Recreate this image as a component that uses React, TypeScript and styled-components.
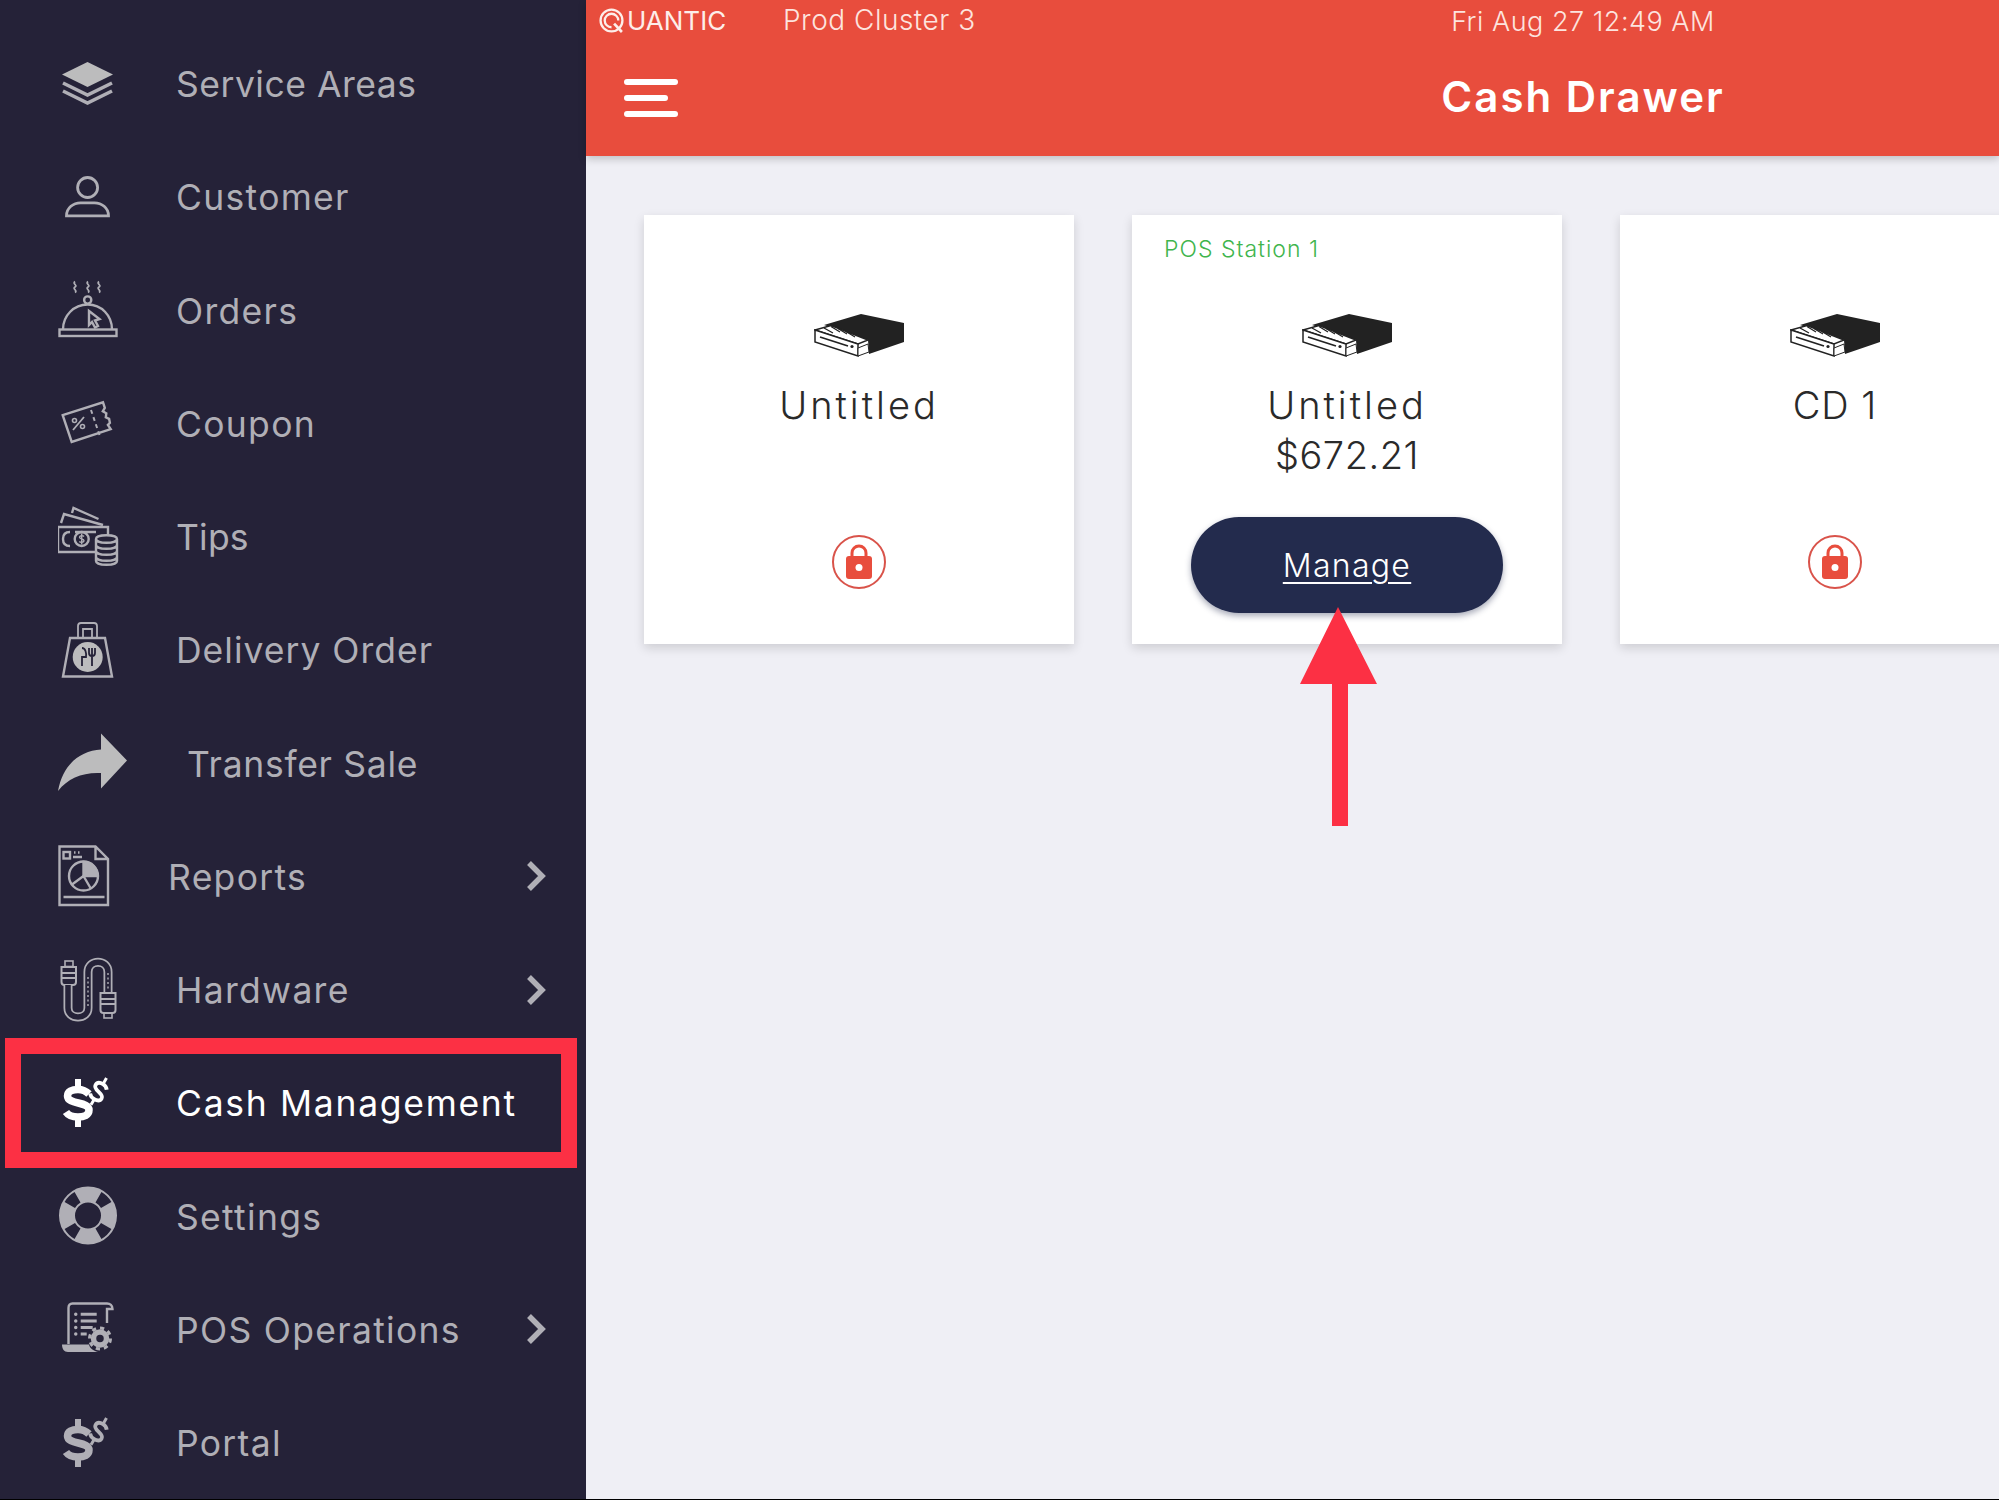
import React from "react";
import styled, { createGlobalStyle } from "styled-components";

const GlobalStyle = createGlobalStyle`
  html, body {
    margin: 0;
    padding: 0;
    height: 1500px;
    overflow: hidden;
    background: #000;
    font-family: Inter, "Liberation Sans", sans-serif;
  }
`;

const Page = styled.div`
  display: flex;
  width: 1999px;
  height: 1499px;
  overflow: hidden;
`;

const Sidebar = styled.nav`
  flex: 0 0 586px;
  display: flex;
  flex-direction: column;
  padding-top: 27px;
  box-sizing: border-box;
  background: #252238;
`;

const NavRow = styled.div<{ $active?: boolean }>`
  position: relative;
  flex: 0 0 113.25px;
  display: flex;
  align-items: center;
  padding: 0 40px 0 58px;
  box-sizing: border-box;
  color: ${(p) => (p.$active ? "#ffffff" : "#b0afb6")};
`;

const NavIcon = styled.svg`
  flex: 0 0 70px;
  width: 70px;
  height: 70px;
  fill: none;
  stroke: currentColor;
  stroke-width: 2.4;
  color: inherit;
`;

const NavLabel = styled.span<{ $indent?: number; $tracking?: number }>`
  margin-left: ${(p) => p.$indent ?? 48}px;
  padding-top: 2px;
  font-size: 35.5px;
  font-weight: 400;
  letter-spacing: ${(p) => p.$tracking ?? 1.3}px;
  white-space: nowrap;
`;

const Chevron = styled.svg`
  margin-left: auto;
  width: 20px;
  height: 30px;
  fill: none;
  stroke: #b0afb6;
  stroke-width: 5.5;
`;

const HighlightBox = styled.div`
  position: absolute;
  top: -8px;
  bottom: -8px;
  left: 5px;
  right: 9px;
  border: 16px solid #fc3044;
`;

const Content = styled.div`
  flex: 1;
  display: flex;
  flex-direction: column;
  min-width: 0;
  background: #efeff5;
`;

const Header = styled.header`
  position: relative;
  z-index: 1;
  flex: 0 0 156px;
  display: grid;
  grid-template-columns: 1fr 832px;
  grid-template-rows: 40px 1fr;
  background: #e84d3d;
  color: #ffffff;
  box-shadow: 0 3px 8px rgba(0, 0, 0, 0.2);
`;

const StatusLeft = styled.div`
  display: flex;
  align-items: center;
  padding-left: 13px;
`;

const Brand = styled.div`
  display: flex;
  align-items: center;
  gap: 3px;
  width: 184px;
  font-size: 26px;
  font-weight: 400;
  color: #fdeeea;
`;

const BrandMark = styled.svg`
  width: 25px;
  height: 25px;
  fill: none;
  stroke: #fdeeea;
  stroke-width: 2.2;
`;

const Cluster = styled.span`
  font-size: 28px;
  font-weight: 300;
  letter-spacing: 0.5px;
  color: #fde4df;
`;

const Clock = styled.div`
  display: flex;
  align-items: center;
  justify-content: center;
  padding-top: 2px;
  font-size: 27px;
  font-weight: 300;
  letter-spacing: 0.5px;
  color: #fde4df;
`;

const Hamburger = styled.div`
  display: flex;
  flex-direction: column;
  gap: 10px;
  padding: 39px 0 0 38px;
`;

const HamburgerBar = styled.span<{ $short?: boolean }>`
  display: block;
  width: ${(p) => (p.$short ? 44 : 54)}px;
  height: 6px;
  border-radius: 3px;
  background: #ffffff;
`;

const Title = styled.h1`
  margin: 0;
  padding-top: 10px;
  text-align: center;
  font-size: 42px;
  line-height: 94px;
  font-weight: 600;
  letter-spacing: 2px;
`;

const Main = styled.main`
  position: relative;
  flex: 1;
  display: flex;
  align-items: flex-start;
  gap: 58px;
  padding: 59px 0 0 58px;
  overflow: hidden;
`;

const Card = styled.section`
  flex: 0 0 430px;
  height: 429px;
  display: flex;
  flex-direction: column;
  align-items: center;
  box-sizing: border-box;
  padding: 20px 0 31px;
  background: #ffffff;
  box-shadow: 0 4px 10px rgba(0, 0, 0, 0.14);
`;

const StationLabel = styled.div`
  align-self: stretch;
  height: 28px;
  margin-bottom: 50px;
  padding-left: 32px;
  font-size: 23px;
  line-height: 28px;
  font-weight: 300;
  letter-spacing: 1px;
  color: #3fb54d;
`;

const DrawerIcon = styled.svg`
  width: 91px;
  height: 44px;
  flex: none;
`;

const CardName = styled.div`
  margin-top: 23px;
  font-size: 38px;
  line-height: 50px;
  font-weight: 300;
  text-align: center;
  color: #2a2a2a;
`;

const NameLine = styled.div<{ $tracking: number }>`
  letter-spacing: ${(p) => p.$tracking}px;
`;

const CardFooter = styled.div`
  margin-top: auto;
  height: 96px;
  display: flex;
  align-items: center;
  justify-content: center;
  align-self: stretch;
`;

const LockBadge = styled.div`
  width: 54px;
  height: 54px;
  margin-bottom: 6px;
  border: 2px solid #d9534a;
  border-radius: 50%;
  box-sizing: border-box;
  display: flex;
  align-items: center;
  justify-content: center;
`;

const ManageButton = styled.button`
  width: 312px;
  height: 96px;
  border: none;
  border-radius: 48px;
  background: #232b4d;
  color: #ffffff;
  font-family: inherit;
  font-size: 32px;
  font-weight: 300;
  letter-spacing: 1.3px;
  text-decoration: underline;
  text-underline-offset: 5px;
  text-decoration-thickness: 2px;
  box-shadow: 0 3px 6px rgba(35, 43, 77, 0.4);
`;

const PointerArrow = styled.svg`
  position: absolute;
  left: 714px;
  top: 451px;
  width: 78px;
  height: 220px;
  fill: #fc3044;
`;

const LayersIcon = () => (
  <NavIcon viewBox="0 0 70 70">
    <polygon points="4,25.5 29.5,13 55,25.5 29.5,38" fill="#bcbcbd" stroke="none" />
    <polyline points="5,34 29.5,46 54,34" strokeWidth="3.6" />
    <polyline points="5,42 29.5,54 54,42" strokeWidth="3.6" />
  </NavIcon>
);

const CustomerIcon = () => (
  <NavIcon viewBox="0 0 70 70">
    <circle cx="29.6" cy="25.5" r="10" strokeWidth="2.8" />
    <path d="M8.5 53.8h42c0-8-7-13-14-13h-14c-7 0-14 5-14 13z" strokeWidth="2.8" />
  </NavIcon>
);

const OrdersIcon = () => (
  <NavIcon viewBox="0 0 70 70">
    <path d="M17 6.500c-3 2.500 3 3.500 0 5.500s3 3.500 0 5.500M30 6.500c-3 2.500 3 3.500 0 5.500s3 3.500 0 5.500M41 6.500c-3 2.500 3 3.500 0 5.500s3 3.500 0 5.500" strokeWidth="1.800" />
    <circle cx="29.7" cy="25" r="3.600" />
    <path d="M5 54.500c0-14 11-25 24.700-25s24.300 11 24.300 25" />
    <rect x="1.500" y="54.500" width="57" height="6.500" />
    <path d="M31 36l10.500 8-4.500 1.500 3 5.500-3 1.500-3-5.500-3 3z" />
  </NavIcon>
);

const CouponIcon = () => (
  <NavIcon viewBox="0 0 70 70">
    <path d="M4.700 27.200L45 14.300l1.800 5.500-2 3.500 3.500 2-.5 4 3.300 1.500.8 4-2 2 2.800 4.400L13.700 54z" />
    <circle cx="16.500" cy="32.500" r="2" strokeWidth="1.600" />
    <circle cx="24.500" cy="38.500" r="2" strokeWidth="1.600" />
    <line x1="26" y1="29" x2="15" y2="42" strokeWidth="1.800" />
    <line x1="33" y1="22" x2="41.500" y2="47" strokeWidth="2" strokeDasharray="4 3.500" />
  </NavIcon>
);

const TipsIcon = () => (
  <NavIcon viewBox="0 0 70 70" strokeWidth="1.800">
    <path d="M3 21l3-9 39 11M14 11l1.500-5 25 11" />
    <path d="M38 50H0V25h50v8" />
    <path d="M12 30c-5 0-7 3-7 7s2 7 7 7M38 30H17" />
    <circle cx="23.700" cy="37" r="7" />
    <path d="M26 34.500c-1-1.200-4.500-1.200-4.500.8s4.500 1.400 4.500 3.400-3.500 2-4.700.8M23.700 31.500v11" strokeWidth="1.400" />
    <path d="M38 37c0-5 21-5 21 0v22c0 5-21 5-21 0zM38 37c0 5 21 5 21 0M38 43c0 5 21 5 21 0M38 49c0 5 21 5 21 0M38 55c0 5 21 5 21 0" />
  </NavIcon>
);

const DeliveryIcon = () => (
  <NavIcon viewBox="0 0 70 70">
    <path d="M12 23h35l7 38.500H5z" />
    <path d="M20 23V11c0-2 1-3 3-3h13c2 0 3 1 3 3v12M25 23V14h9v9" strokeWidth="1.800" />
    <circle cx="29.700" cy="42" r="15" fill="#bcbcbd" stroke="none" />
    <path d="M24 33c3.500 0 4.500 5 4 9h-4v9M31 33v5c0 2 1.500 3 3 3s3-1 3-3v-5M34 33v18" stroke="#252238" strokeWidth="1.800" />
  </NavIcon>
);

const TransferIcon = () => (
  <NavIcon viewBox="0 0 70 70">
    <path d="M69 32.500L43 5.500v16C22 23 5 36 0 63c10-13 25-19 43-18v15.500z" fill="#bcbcbd" stroke="none" />
  </NavIcon>
);

const ReportsIcon = () => (
  <NavIcon viewBox="0 0 70 70" strokeWidth="1.800">
    <path d="M1.500 5.500h36l12.500 12.500v46H1.500zM37.500 5.500v12.500h12.500" />
    <rect x="5.500" y="11" width="6.500" height="6.500" />
    <path d="M15 16h9M16 11.500h1.500M20 11.500h1.500M5.500 56h41" />
    <circle cx="25.500" cy="35" r="14.500" />
    <path d="M25.500 21a14 14 0 0 1 14 14h-14z" fill="currentColor" />
    <path d="M25.500 35L14 43.500M25.500 35l7 12" />
  </NavIcon>
);

const HardwareIcon = () => (
  <NavIcon viewBox="0 0 70 70">
    <rect x="7" y="6" width="8" height="5.500" strokeWidth="1.600" />
    <path d="M3.500 12h14.500v15c0 2-1 3-3 3H6.500c-2 0-3-1-3-3zM4 18h14M4 23h14" strokeWidth="2" />
    <path d="M10 30v23c0 12 20 12 20 0V17c0-13 20-13 20 0v20" strokeWidth="9" />
    <path d="M10 30v23c0 12 20 12 20 0V17c0-13 20-13 20 0v20" stroke="#252238" strokeWidth="5.500" />
    <path d="M30 22v30M50 18v18" strokeWidth="1.400" strokeDasharray="2 2.500" />
    <path d="M42.500 38h15v17c0 2-1 3-3 3h-9c-2 0-3-1-3-3zM43 44h14M43 49h14" fill="#252238" strokeWidth="2" />
    <rect x="46" y="58" width="8" height="5" strokeWidth="1.600" />
  </NavIcon>
);

const DollarIcon = () => (
  <NavIcon viewBox="0 0 70 70">
    <path d="M31 26c-3-3-7-4.500-11-4.500-6 0-10.500 2-10.500 6.500C9.500 37 31 33 31 42c0 5-5 7-11 7-5 0-10-2-12-5" strokeWidth="7.500" />
    <path d="M20 11v9M20 50v9" strokeWidth="6" />
    <g transform="rotate(30 41 23)">
      <path d="M47 18c-1.500-2-3.500-3-6-3-3.500 0-6 1.500-6 4.500 0 6 12 3 12 8.500 0 3-2.500 4.500-6 4.500-2.500 0-5-1-6.500-3" strokeWidth="3.800" />
      <path d="M41 8v6M41 33v6" strokeWidth="3" />
    </g>
  </NavIcon>
);

const SettingsIcon = () => (
  <NavIcon viewBox="0 0 70 70">
    <circle cx="30" cy="34.500" r="21" strokeWidth="16" />
    <circle
      cx="30"
      cy="34.500"
      r="21"
      pathLength={360}
      stroke="#252238"
      strokeWidth="12"
      strokeDasharray="30 60"
      strokeDashoffset={-30}
    />
  </NavIcon>
);

const OperationsIcon = () => (
  <NavIcon viewBox="0 0 70 70">
    <path d="M10.500 50V14c0-3 1.500-4.500 4-4.500H49c3 0 5.500 2 5.500 5.500h-5.500v14" />
    <path d="M4 50.500h27c1 4 4 6 9 7.500H10c-4 0-6-3-6-7.500z" fill="currentColor" stroke="none" />
    <path d="M22.700 20.300h16M22.700 27h16M22.700 33.500h12M22.700 40h6" strokeWidth="3" />
    <path d="M17.700 20.300h.1M17.700 27h.1M17.700 33.500h.1M17.700 40h.1" strokeWidth="3.400" strokeLinecap="round" />
    <circle cx="42" cy="44.500" r="6.500" strokeWidth="5.500" />
    <circle cx="42" cy="44.500" r="10.500" strokeWidth="3" strokeDasharray="4.200 4" />
  </NavIcon>
);

const NavChevron = () => (
  <Chevron viewBox="0 0 20 30">
    <polyline points="3,2 16,15 3,28" />
  </Chevron>
);

const DrawerGraphic = () => (
  <DrawerIcon viewBox="0 0 91 44">
    <polygon points="10,12 47,1 90,10 90,29 55,41 54,27" fill="#222222" />
    <polygon points="1,17 17,12.500 54,27 44,31" fill="#ffffff" stroke="#222222" strokeWidth="1.500" />
    <polygon points="1,17 44,31 44,43 1,29" fill="#ffffff" stroke="#222222" strokeWidth="1.500" />
    <polygon points="44,43 55,39 54,31 44,35" fill="#ffffff" stroke="#222222" strokeWidth="1" />
    <path d="M10 15l9 5M17 13.500l9 5.500M24 15.500l9 5.500M32 18.500l9 5.500" stroke="#222222" strokeWidth="1.300" />
    <line x1="6" y1="24" x2="34" y2="33" stroke="#222222" strokeWidth="1.800" />
    <circle cx="38" cy="33.500" r="1.600" fill="#222222" />
  </DrawerIcon>
);

const LockGraphic = () => (
  <svg width="26" height="36" viewBox="0 0 26 36">
    <path d="M6 14V9a7 7 0 0 1 14 0v5" fill="none" stroke="#e84d3d" strokeWidth="3" />
    <rect x="0" y="12" width="26" height="23" rx="3" fill="#e84d3d" />
    <circle cx="13" cy="23.500" r="3.500" fill="#ffffff" />
  </svg>
);

const navItems = [
  { label: "Service Areas", Icon: LayersIcon, tracking: 0.5 },
  { label: "Customer", Icon: CustomerIcon },
  { label: "Orders", Icon: OrdersIcon },
  { label: "Coupon", Icon: CouponIcon },
  { label: "Tips", Icon: TipsIcon, tracking: 0.2 },
  { label: "Delivery Order", Icon: DeliveryIcon, tracking: 1 },
  { label: "Transfer Sale", Icon: TransferIcon, indent: 59, tracking: 0.7 },
  { label: "Reports", Icon: ReportsIcon, indent: 40, more: true },
  { label: "Hardware", Icon: HardwareIcon, more: true },
  { label: "Cash Management", Icon: DollarIcon, active: true, tracking: 1.7 },
  { label: "Settings", Icon: SettingsIcon },
  { label: "POS Operations", Icon: OperationsIcon, more: true },
  { label: "Portal", Icon: DollarIcon },
];

const drawers = [
  { name: [{ text: "Untitled", tracking: 3 }] },
  {
    name: [
      { text: "Untitled", tracking: 3 },
      { text: "$672.21", tracking: 0.5 },
    ],
    station: "POS Station 1",
    open: true,
  },
  { name: [{ text: "CD 1", tracking: 1 }] },
];

export default function App() {
  return (
    <Page>
      <GlobalStyle />
      <Sidebar>
        {navItems.map(({ label, Icon, indent, tracking, more, active }) => (
          <NavRow key={label} $active={active}>
            <Icon />
            <NavLabel $indent={indent} $tracking={tracking}>
              {label}
            </NavLabel>
            {more && <NavChevron />}
            {active && <HighlightBox />}
          </NavRow>
        ))}
      </Sidebar>
      <Content>
        <Header>
          <StatusLeft>
            <Brand>
              <BrandMark viewBox="0 0 24 24">
                <circle cx="12" cy="12" r="10.500" />
                <path d="M12 18.500a6.500 6.500 0 1 1 6.500-6.500" />
                <path d="M14.500 15l7.500 8" strokeWidth="2.600" />
              </BrandMark>
              UANTIC
            </Brand>
            <Cluster>Prod Cluster 3</Cluster>
          </StatusLeft>
          <Clock>Fri Aug 27 12:49 AM</Clock>
          <Hamburger>
            <HamburgerBar />
            <HamburgerBar $short />
            <HamburgerBar />
          </Hamburger>
          <Title>Cash Drawer</Title>
        </Header>
        <Main>
          {drawers.map((drawer) => (
            <Card key={drawer.name[0].text + drawer.name.length}>
              <StationLabel>{drawer.station}</StationLabel>
              <DrawerGraphic />
              <CardName>
                {drawer.name.map((line) => (
                  <NameLine key={line.text} $tracking={line.tracking}>
                    {line.text}
                  </NameLine>
                ))}
              </CardName>
              <CardFooter>
                {drawer.open ? (
                  <ManageButton>Manage</ManageButton>
                ) : (
                  <LockBadge>
                    <LockGraphic />
                  </LockBadge>
                )}
              </CardFooter>
            </Card>
          ))}
          <PointerArrow viewBox="0 0 78 220">
            <polygon points="38,0 77,77 48,77 48,219 32,219 32,77 0,77" />
          </PointerArrow>
        </Main>
      </Content>
    </Page>
  );
}
